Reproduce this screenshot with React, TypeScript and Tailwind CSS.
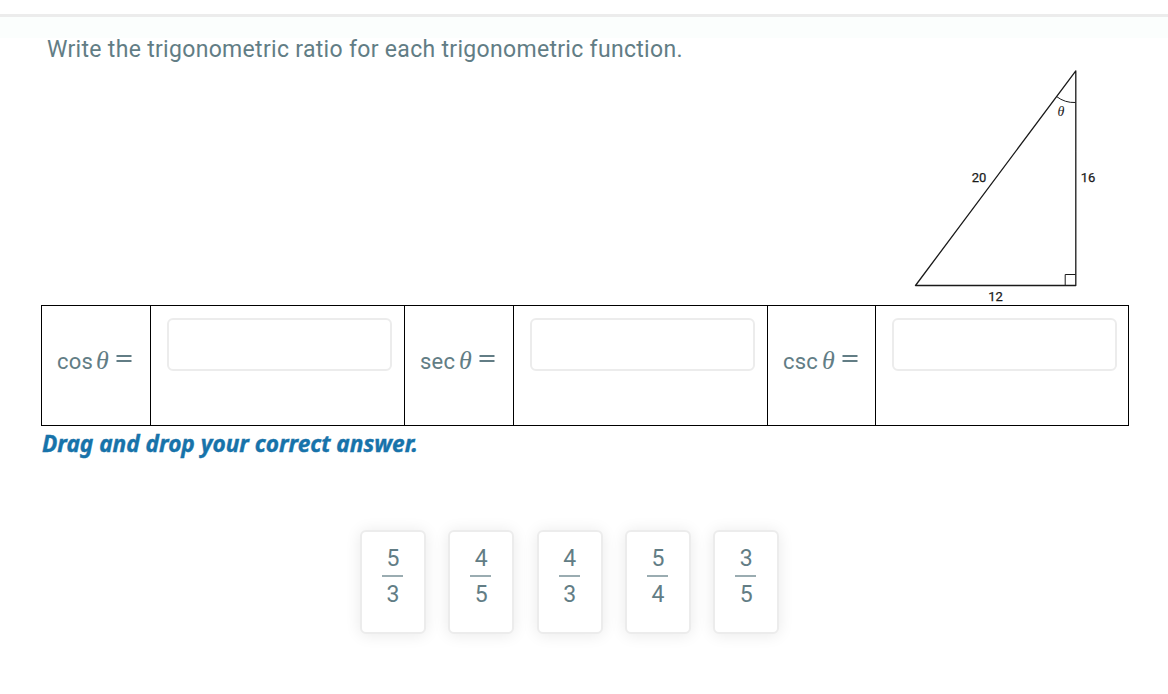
import * as React from 'react';

const ROWS = [
  { fn: 'cos', labelCell: 'w-[109px] pl-[15px]', slotCell: 'w-[254px]' },
  { fn: 'sec', labelCell: 'w-[109px] pl-[15px]', slotCell: 'w-[254px]' },
  { fn: 'csc', labelCell: 'w-[108px] pl-[15px]', slotCell: 'w-[253px]' },
];

const ANSWERS = [
  { top: 5, bottom: 3 },
  { top: 4, bottom: 5 },
  { top: 4, bottom: 3 },
  { top: 5, bottom: 4 },
  { top: 3, bottom: 5 },
];

const Triangle = () => (
  <svg width="220" height="240" viewBox="0 0 220 240" className="shrink-0" fill="none" stroke="#1a1a1a">
    <path d="M175.8 5.8 L15.5 220.5 H175.8 Z" strokeWidth="1.3" strokeLinejoin="round" />
    <path d="M156.5 31.5 Q165 38 175.5 37.5" strokeWidth="1" />
    <path d="M165.2 220.5 V209.5 H175.5" strokeWidth="1" />
    <g fill="#1a1a1a" strokeWidth="0.25" className="font-['Roboto',sans-serif] text-[13px]">
      <text x="71.8" y="117">20</text>
      <text x="180.8" y="117">16</text>
      <text x="88.3" y="235.5">12</text>
      <text x="157.5" y="50.5" stroke="none" className="font-['Liberation_Serif',serif] text-[14px] italic">θ</text>
    </g>
  </svg>
);

const Equation = ({ fn }: { fn: string }) => (
  <div className="flex items-baseline text-[22px] leading-6">
    <span className="w-[35px] tracking-[0.2px]">{fn}</span>
    <span className="ml-[4px] w-[14px] font-['Liberation_Serif',serif] text-[26px] italic">θ</span>
    <svg width="16" height="18" viewBox="0 0 16 18" className="ml-[6px]" stroke="currentColor" strokeWidth="2">
      <path d="M0.5 5 H15.5 M0.5 10 H15.5" />
    </svg>
  </div>
);

const AnswerTile = ({ top, bottom }: { top: number; bottom: number }) => (
  <button
    type="button"
    className="flex h-[104px] w-[66px] cursor-grab flex-col items-center rounded-[6px] border-2 border-[#ececec] bg-white pt-[15px] text-[23px] leading-6 shadow-[0_1px_16px_rgba(0,0,0,0.09)]"
  >
    <span>{top}</span>
    <span className="mt-[4px] mr-px mb-[6px] h-[2px] w-[21px] bg-[#9aacb1]" />
    <span>{bottom}</span>
  </button>
);

export default function App() {
  return (
    <main className="h-[694px] w-full overflow-hidden bg-white font-['Roboto',sans-serif] text-[#627d85]">
      <div className="h-[14px]" />
      <div className="h-[3px] bg-[#ececec]" />
      <div className="h-[21px] bg-[#fbfefd]" />

      {/* Question and figure */}
      <section className="flex h-[267px] justify-between pl-[47px] pr-[48px]">
        <h1 className="text-[23px] leading-6 tracking-[0.31px] whitespace-nowrap">
          Write the trigonometric ratio for each trigonometric function.
        </h1>
        <div className="pt-[27px]">
          <Triangle />
        </div>
      </section>

      {/* Drop slots */}
      <section className="ml-[41px] flex h-[121px] w-[1088px] border-y border-l border-black">
        {ROWS.map((row) => (
          <React.Fragment key={row.fn}>
            <div className={`flex items-center border-r border-black pb-[9px] ${row.labelCell}`}>
              <Equation fn={row.fn} />
            </div>
            <div className={`border-r border-black pt-[12px] pl-[16px] ${row.slotCell}`}>
              <div className="h-[53px] w-[225px] rounded-[6px] border-2 border-[#ececec]" />
            </div>
          </React.Fragment>
        ))}
      </section>

      <p className="mt-[3px] ml-[42px] h-[28px] w-[500px] origin-left scale-x-[0.984] font-['Noto_Sans',sans-serif] text-[23px] leading-7 font-bold whitespace-nowrap text-[#1773aa] italic [-webkit-text-stroke:0.4px_#1773aa]">
        Drag and drop your correct answer.
      </p>

      {/* Draggable answers */}
      <section className="mt-[73px] ml-[360px] flex gap-[22.3px]">
        {ANSWERS.map((answer) => (
          <AnswerTile key={`${answer.top}/${answer.bottom}`} {...answer} />
        ))}
      </section>
    </main>
  );
}
